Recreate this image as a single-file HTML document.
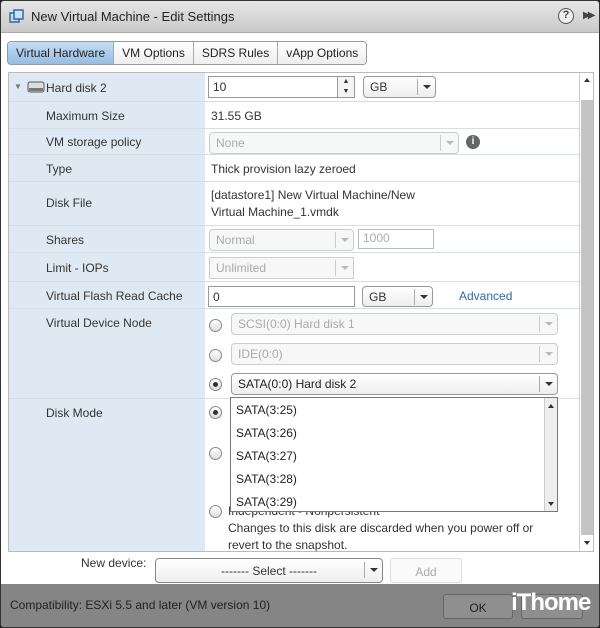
<!DOCTYPE html>
<html><head><style>
*{box-sizing:border-box;margin:0;padding:0}
body{width:600px;height:628px;overflow:hidden;background:#222;font-family:"Liberation Sans",sans-serif;font-size:12px;color:#333;position:relative}
.dlg{position:absolute;left:0;top:0;width:600px;height:628px;background:#fff;border:1px solid #333;border-radius:4px;overflow:hidden}
.title{position:absolute;left:0;top:0;width:600px;height:32px;background:linear-gradient(#e6e6e6,#c9c9c9);border-bottom:1px solid #aaa}
.title span{position:absolute;left:30px;top:8px;font-size:13px;color:#222}
.abs{position:absolute}
.tabs{position:absolute;left:6px;top:40px;height:24px;display:flex;border:1px solid #999;border-radius:4px;overflow:hidden}
.tabs div{padding:4px 8px 0;height:22px;border-left:1px solid #aaa;background:linear-gradient(#fff,#eee);font-size:12px;color:#222}
.tabs div.on{background:linear-gradient(#c5dcf2,#94bde3);border-left:none}
.tbl{position:absolute;left:7px;top:71px;width:586px;height:480px;border:1px solid #bbb;overflow:hidden;background:#fff}
.lc{position:absolute;left:0;top:0;width:196px;height:480px;background:#dfe9f3}
.row{position:absolute;left:0;width:570px;border-bottom:1px solid #d6dde4}
.lbl{position:absolute;left:37px;font-size:12px;color:#333}
.val{position:absolute;left:202px;font-size:12px;color:#333}
.inp{position:absolute;background:#fff;border:1px solid #999;height:22px;font-size:12px;padding:3px 4px}
.sel{position:absolute;border:1px solid #999;border-radius:4px;background:linear-gradient(#fff,#eee);height:22px;font-size:12px;padding:3px 6px}
.sel.dis{border-color:#ccc;color:#aaa;background:#f7f7f7}
.sel .ar{position:absolute;right:0;top:2px;width:18px;height:16px;border-left:1px solid #aaa}
.sel .ar:after{content:"";position:absolute;left:5px;top:6px;border-left:4px solid transparent;border-right:4px solid transparent;border-top:4px solid #333}
.sel.dis .ar{border-color:#ccc}.sel.dis .ar:after{border-top-color:#bbb}
.rad{position:absolute;width:13px;height:13px;border:1px solid #888;border-radius:50%;background:linear-gradient(#fff,#ddd)}
.rad.on:after{content:"";position:absolute;left:3px;top:3px;width:5px;height:5px;border-radius:50%;background:#333}
.sb{position:absolute;left:570px;top:0;width:15px;height:478px;background:#fff;border-left:1px solid #ccc}
.dd{position:absolute;left:229px;top:396px;width:328px;height:115px;background:#fff;border:1px solid #777}
.dd div{height:23px;padding:5px 5px 0;font-size:12px;color:#222}
.foot{position:absolute;left:0;top:583px;width:600px;height:45px;background:#858585}
.tri{position:absolute;left:3px;width:0;height:0;border-left:3px solid transparent;border-right:3px solid transparent}
</style></head><body><div class="dlg">
<div class="title">
<svg class="abs" style="left:8px;top:8px" width="16" height="16"><rect x="1" y="4" width="9" height="9" fill="none" stroke="#2a6bb0" stroke-width="1.5"/><rect x="5" y="1" width="9" height="9" fill="#cfe2f5" stroke="#2a6bb0" stroke-width="1.5"/></svg>
<span>New Virtual Machine - Edit Settings</span>
<div class="abs" style="left:557px;top:7px;width:16px;height:16px;border:1.5px solid #555;border-radius:50%;font-size:11px;font-weight:bold;text-align:center;line-height:13px;color:#444;background:#eee">?</div>
<div class="abs" style="left:582px;top:9px;font-size:10px;color:#444;letter-spacing:-3px">▶▶</div>
</div>
<div class="tabs"><div class="on">Virtual Hardware</div><div>VM Options</div><div>SDRS Rules</div><div>vApp Options</div></div>
<div class="tbl">
<div class="lc"></div>
<div class="row" style="top:0;height:29px"><span class="abs" style="left:5px;top:9px;font-size:8px;color:#777">▼</span><svg class="abs" style="left:18px;top:8px" width="18" height="12"><rect x="1" y="1" width="16" height="10" rx="2" fill="#ddd" stroke="#555"/><rect x="2" y="7" width="14" height="3" fill="#777"/></svg><span class="lbl" style="top:8px">Hard disk 2</span>
<div class="inp" style="left:199px;top:3px;width:147px">10</div>
<div class="abs" style="left:328px;top:3px;width:18px;height:22px;border:1px solid #999;background:#f4f4f4;font-size:7px;text-align:center;line-height:10px">▲<br>▼</div>
<div class="sel" style="left:354px;top:3px;width:73px">GB<div class="ar"></div></div></div>
<div class="row" style="top:29px;height:27px"><span class="lbl" style="top:7px">Maximum Size</span><span class="val" style="top:7px">31.55 GB</span></div>
<div class="row" style="top:56px;height:26px"><span class="lbl" style="top:6px">VM storage policy</span><div class="sel dis" style="left:200px;top:3px;width:250px">None<div class="ar"></div></div><div class="abs" style="left:457px;top:6px;width:14px;height:14px;border-radius:50%;background:#666;color:#fff;font-size:10px;font-weight:bold;text-align:center;line-height:14px">i</div></div>
<div class="row" style="top:82px;height:27px"><span class="lbl" style="top:7px">Type</span><span class="val" style="top:7px">Thick provision lazy zeroed</span></div>
<div class="row" style="top:109px;height:44px"><span class="lbl" style="top:14px">Disk File</span><span class="val" style="top:5px;line-height:17px">[datastore1] New Virtual Machine/New<br>Virtual Machine_1.vmdk</span></div>
<div class="row" style="top:153px;height:27px"><span class="lbl" style="top:7px">Shares</span><div class="sel dis" style="left:200px;top:3px;width:145px">Normal<div class="ar"></div></div><div class="inp" style="left:349px;top:3px;width:76px;height:20px;border-color:#bbb;color:#aaa;padding-top:1px">1000</div></div>
<div class="row" style="top:180px;height:29px"><span class="lbl" style="top:8px">Limit - IOPs</span><div class="sel dis" style="left:200px;top:4px;width:145px;border-radius:0">Unlimited<div class="ar"></div></div></div>
<div class="row" style="top:209px;height:27px"><span class="lbl" style="top:7px">Virtual Flash Read Cache</span><div class="inp" style="left:199px;top:4px;width:147px;height:21px">0</div><div class="sel" style="left:353px;top:4px;width:71px;height:21px">GB<div class="ar"></div></div><span class="abs" style="left:450px;top:7px;color:#2c6aa8">Advanced</span></div>
<div class="row" style="top:236px;height:90px"><span class="lbl" style="top:7px">Virtual Device Node</span>
<div class="rad" style="left:200px;top:10px"></div><div class="sel dis" style="left:222px;top:4px;width:327px">SCSI(0:0) Hard disk 1<div class="ar"></div></div>
<div class="rad" style="left:200px;top:40px"></div><div class="sel dis" style="left:222px;top:34px;width:327px">IDE(0:0)<div class="ar"></div></div>
<div class="rad on" style="left:200px;top:69px"></div><div class="sel" style="left:222px;top:64px;width:327px;color:#222">SATA(0:0) Hard disk 2<div class="ar"></div></div></div>
<div class="row" style="top:326px;height:160px;border:none"><span class="lbl" style="top:7px">Disk Mode</span>
<div class="rad on" style="left:200px;top:7px"></div><div class="rad" style="left:200px;top:48px"></div><div class="rad" style="left:200px;top:106px"></div>
<span class="val" style="left:219px;top:104px;line-height:17px">Independent - Nonpersistent<br>Changes to this disk are discarded when you power off or<br>revert to the snapshot.</span></div>
<div class="sb"><div class="tri" style="top:5px;border-bottom:4px solid #333;left:4px"></div><div class="abs" style="left:1px;top:27px;width:13px;height:435px;background:#c4c4c4"></div><div class="tri" style="top:468px;border-top:4px solid #333;left:4px"></div></div>
</div>
<div class="dd"><div>SATA(3:25)</div><div>SATA(3:26)</div><div>SATA(3:27)</div><div>SATA(3:28)</div><div>SATA(3:29)</div>
<div class="abs" style="right:0;top:0;width:13px;height:113px;background:#eee;border-left:1px solid #ccc;padding:0"><span class="tri" style="top:6px;border-bottom:4px solid #333"></span><span class="tri" style="top:104px;border-top:4px solid #333"></span></div></div>
<span class="abs" style="left:80px;top:555px;font-size:12px">New device:</span>
<div class="sel" style="left:154px;top:557px;width:228px;height:25px;text-align:center;padding-top:5px;border-color:#888">------- Select -------<div class="ar" style="top:3px"></div></div>
<div class="abs" style="left:389px;top:557px;width:72px;height:25px;border:1px solid #ddd;border-radius:3px;color:#aaa;text-align:center;padding-top:6px;background:#fafafa">Add</div>
<div class="foot"><span class="abs" style="left:9px;top:14px;color:#222">Compatibility: ESXi 5.5 and later (VM version 10)</span>
<div class="abs" style="left:442px;top:10px;width:70px;height:25px;border:1px solid #666;border-radius:3px;background:#8f8f8f;text-align:center;padding-top:6px;color:#222">OK</div>
<div class="abs" style="left:520px;top:10px;width:62px;height:25px;border:1px solid #666;border-radius:3px;background:#8f8f8f"></div>
<span class="abs" style="left:510px;top:5px;font-size:24px;font-weight:bold;color:#fff;letter-spacing:-1px">iThome</span></div>
</div></body></html>
